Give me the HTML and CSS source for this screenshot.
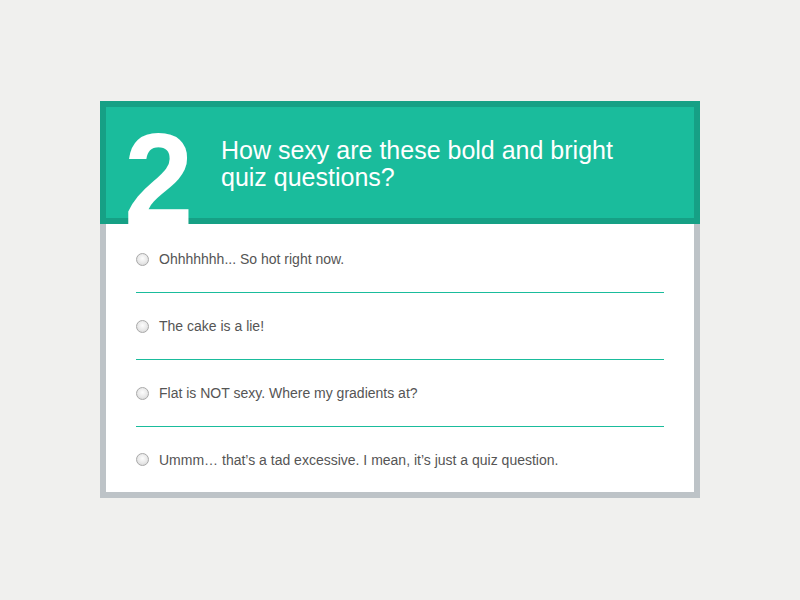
FILE: index.html
```html
<!DOCTYPE html>
<html>
<head>
<meta charset="utf-8">
<link rel="stylesheet" href="styles.css">
</head>
<body>
<div class="quiz">
  <div class="quiz-header">
    <span class="quiz-number">2</span>
    <h1 class="quiz-title">How sexy are these bold and bright<br>quiz questions?</h1>
  </div>
  <ul class="quiz-options">
    <li class="quiz-option"><input type="radio" name="q" class="quiz-radio"><span>Ohhhhhhh... So hot right now.</span></li>
    <li class="quiz-option"><input type="radio" name="q" class="quiz-radio"><span>The cake is a lie!</span></li>
    <li class="quiz-option"><input type="radio" name="q" class="quiz-radio"><span>Flat is NOT sexy. Where my gradients at?</span></li>
    <li class="quiz-option"><input type="radio" name="q" class="quiz-radio"><span>Ummm… that’s a tad excessive. I mean, it’s just a quiz question.</span></li>
  </ul>
</div>
</body>
</html>
```

FILE: styles.css
```css
html, body {
  margin: 0;
  padding: 0;
}
body {
  background: #f0f0ee;
  font-family: "Liberation Sans", Arial, sans-serif;
}
.quiz {
  width: 600px;
  margin: 101px auto 0;
}
.quiz-header {
  position: relative;
  height: 111px;
  border: 6px solid #16a085;
  background: #1abc9c;
  display: flex;
  align-items: center;
  padding-left: 115px;
  box-sizing: content-box;
  width: 473px;
}
.quiz-number {
  position: absolute;
  left: 18px;
  top: 7px;
  font-size: 130px;
  line-height: 130px;
  font-weight: bold;
  color: #fff;
  transform: scaleX(0.96);
  transform-origin: left center;
}
.quiz-title {
  margin: 2px 0 0;
  font-size: 25px;
  line-height: 27px;
  font-weight: normal;
  color: #fff;
}
.quiz-options {
  list-style: none;
  margin: 0;
  padding: 2px 30px 0;
  background: #fff;
  border: 6px solid #bdc3c7;
  border-top: none;
}
.quiz-option {
  display: flex;
  align-items: center;
  height: 66px;
  border-bottom: 1px solid #1abc9c;
  font-size: 14px;
  color: #555;
}
.quiz-option:last-child {
  border-bottom: none;
  height: 65px;
}
.quiz-radio {
  appearance: none;
  -webkit-appearance: none;
  width: 13px;
  height: 13px;
  margin: 0 10px 0 0;
  border: 1px solid #a9a9a9;
  border-radius: 50%;
  background: radial-gradient(circle at 50% 40%, #fdfdfd 0%, #e8e8e8 55%, #cfcfcf 100%);
  box-sizing: border-box;
}
```
